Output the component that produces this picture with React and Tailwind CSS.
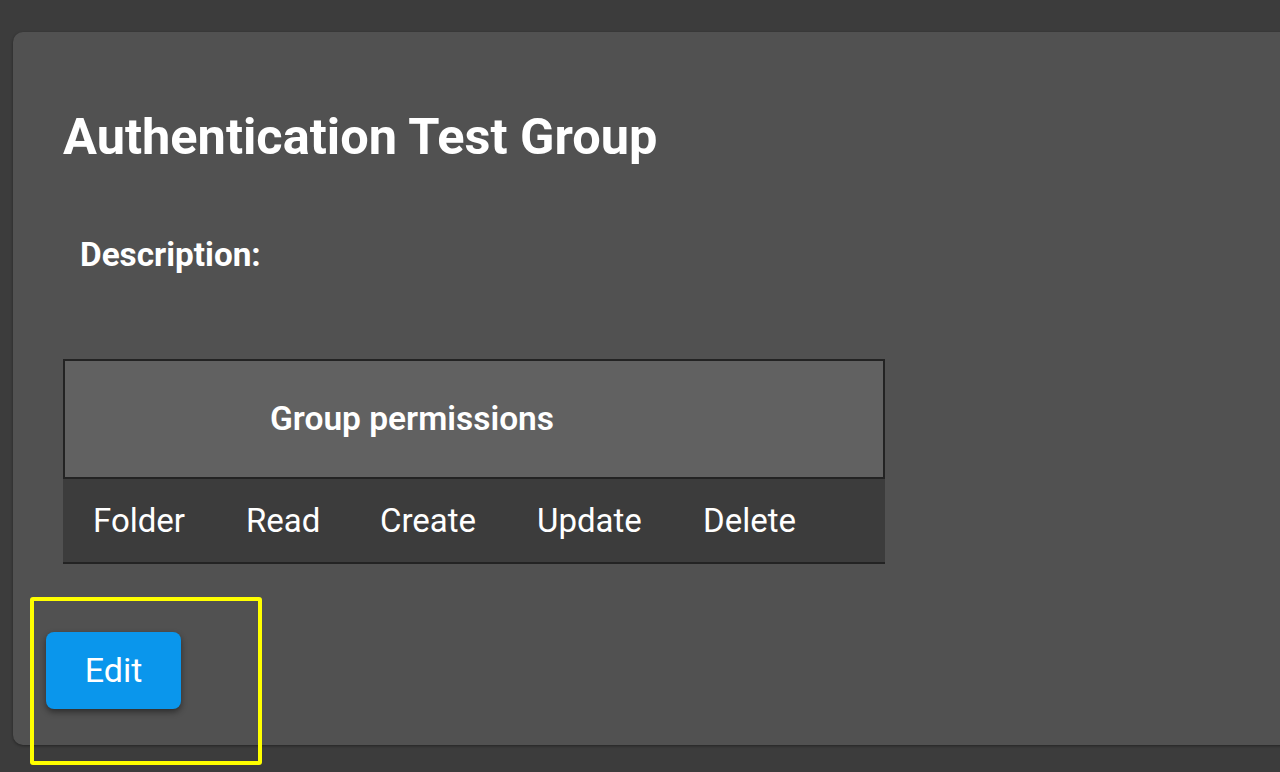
export default function App() {
  const cols = [
    { label: 'Folder', w: 'w-[153px]' },
    { label: 'Read', w: 'w-[134px]' },
    { label: 'Create', w: 'w-[157px]' },
    { label: 'Update', w: 'w-[166px]' },
    { label: 'Delete', w: 'w-[120px]' },
  ]

  return (
    <div
      className="relative h-[772px] w-[1280px] overflow-hidden bg-[#3c3c3c] pl-[13px] pt-[32px]"
      style={{ fontFamily: 'Roboto, "Liberation Sans", sans-serif' }}
    >
      {/* Card */}
      <div className="h-[713px] w-[1300px] rounded-l-[10px] bg-[#515151] pl-[50px] pt-[75px] shadow-[0_1px_3px_rgba(0,0,0,0.4)]">
        <h1 className="text-[50.5px] font-bold leading-[60px] text-white">
          Authentication Test Group
        </h1>

        <p className="ml-[17px] mt-[68px] text-[33.3px] font-bold leading-[40px] text-white">
          Description:
        </p>

        {/* Permissions table */}
        <div className="mt-[84px] w-[822px]">
          <div className="flex h-[120px] items-center border-2 border-[#232323] bg-[#616161] pl-[205px]">
            <span className="text-[33.5px] font-semibold text-white">Group permissions</span>
          </div>
          <div className="flex h-[85px] items-center border-b-2 border-[#232323] bg-[#3c3c3c] pl-[30px]">
            {cols.map((c) => (
              <span key={c.label} className={`${c.w} text-[33px] text-white`}>
                {c.label}
              </span>
            ))}
          </div>
        </div>

        {/* Edit button */}
        <button className="-ml-[17px] mt-[68px] flex h-[77px] w-[135px] items-center justify-center rounded-[8px] bg-[#0a96ec] text-[34px] text-white shadow-[0_3px_6px_rgba(0,0,0,0.45)]">
          Edit
        </button>
      </div>

      {/* Highlight box */}
      <div className="absolute left-[30px] top-[597px] h-[168px] w-[232px] rounded-[3px] border-4 border-[#ffff00]" />
    </div>
  )
}
